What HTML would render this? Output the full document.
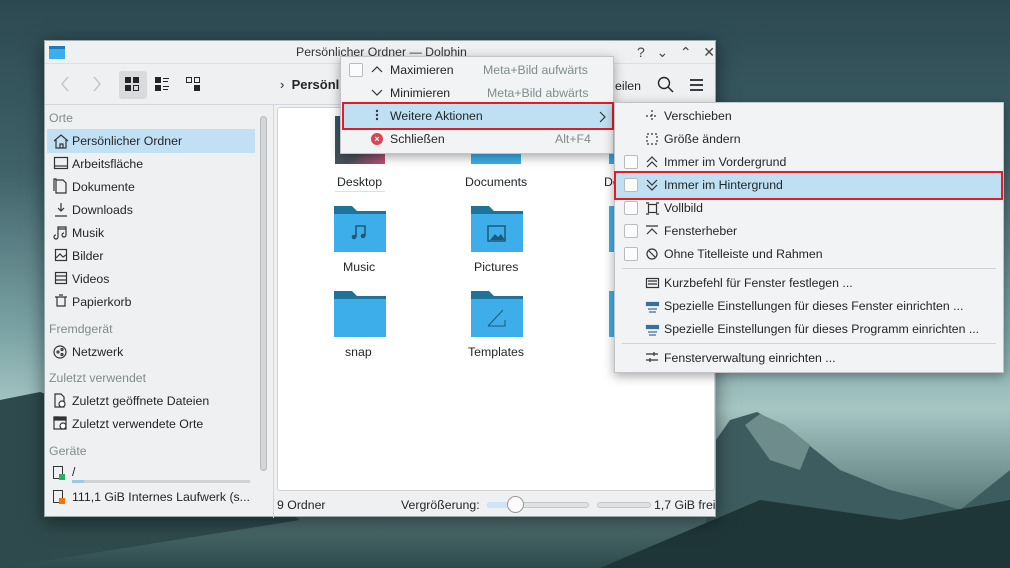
<!DOCTYPE html><html><head><style>
*{box-sizing:border-box;margin:0;padding:0}
body{width:1010px;height:568px;overflow:hidden;font-family:"Liberation Sans","DejaVu Sans",sans-serif;font-size:12.3px;color:#232629;position:relative;background:linear-gradient(180deg,#2c4850 0%,#3f6269 30%,#7aa2a4 58%,#a6c6c4 72%,#2c4a4c 100%)}
.abs{position:absolute}
.win{left:44px;top:40px;width:672px;height:477px;background:#eff0f1;border:1px solid #9aa;box-shadow:0 4px 18px rgba(0,0,0,.5)}
.t{position:absolute;white-space:nowrap;line-height:16px}
.menu{background:#f2f3f4;border:1px solid #c0c4c8;box-shadow:0 3px 10px rgba(0,0,0,.35)}
.cb{position:absolute;width:14px;height:14px;border:1px solid #b8bcc0;background:#fcfcfc;border-radius:2px}
.hl{position:absolute;background:#bfe0f3;outline:2px solid #e01c24}
.gray{color:#7f8c8d}
svg.i{position:absolute;overflow:visible}
svg.i *{fill:none;stroke:#333;stroke-width:1.2}
</style></head><body>
<svg class="abs" style="left:0;top:0" width="1010" height="568">
<path d="M0 400 L40 392 L80 405 L120 395 L160 430 L220 470 L300 520 L0 568Z" fill="#2f4a4d"/>
<path d="M716 440 L730 420 L757 412 L790 430 L840 470 L890 490 L930 500 L960 510 L1010 470 L1010 568 L700 568Z" fill="#3d5c5f"/>
<path d="M745 425 L760 414 L785 425 L810 445 L800 470 L770 460Z" fill="#6f8c8d"/>
<path d="M600 568 L760 500 L900 520 L1010 500 L1010 568Z" fill="#1f3638"/>
</svg>
<div class="abs win">
 <div class="abs" style="left:4px;top:5px;width:16px;height:13px;background:#3daee9;border-top:3px solid #1d7cb5"></div>
 <div class="t" style="left:251px;top:3px;color:#333">Persönlicher Ordner — Dolphin</div>
 <div class="t" style="left:592px;top:3px;font-size:14px;color:#444">?&nbsp;&nbsp; ⌄&nbsp;&nbsp; ⌃&nbsp;&nbsp; ✕</div>
 <div class="abs" style="left:0;top:22px;width:670px;height:1px;background:#dcdfe1"></div>
 <svg class="i" style="left:16px;top:36px" width="50" height="20"><path d="M7 0L1 7 7 14" style="stroke:#bbb"/><path d="M33 0L39 7 33 14" style="stroke:#bbb"/></svg>
 <div class="abs" style="left:74px;top:30px;width:28px;height:28px;background:#d8dadc;border-radius:3px"></div>
 <svg class="abs" style="left:80px;top:36px" width="100" height="16"><g fill="#232629"><rect x="0" y="0" width="6" height="6"/><rect x="8" y="0" width="6" height="6"/><rect x="0" y="8" width="6" height="6"/><rect x="8.5" y="8.5" width="5" height="5" fill="none" stroke="#232629"/></g>
 <g transform="translate(30,0)" fill="#232629"><rect x="0" y="0" width="6" height="6"/><rect x="0" y="8" width="6" height="6"/><rect x="8" y="1" width="6" height="1"/><rect x="8" y="4" width="5" height="1"/><rect x="8" y="9" width="6" height="1"/><rect x="8" y="12" width="5" height="1"/></g>
 <g transform="translate(61,0)" fill="none" stroke="#232629"><rect x="0.5" y="0.5" width="5" height="5"/><rect x="8.5" y="0.5" width="5" height="5"/><rect x="8.5" y="8.5" width="5" height="5" fill="#232629"/></g></svg>
 <div class="t" style="left:235px;top:36px;font-size:13px">›&nbsp; <b>Persönli</b></div>
 <div class="t" style="left:570px;top:37px">eilen</div>
 <svg class="abs" style="left:612px;top:35px" width="60" height="18"><circle cx="7" cy="7" r="5.5" fill="none" stroke="#232629" stroke-width="1.4"/><path d="M11 11 L16 16" stroke="#232629" stroke-width="1.5"/><path d="M33 4h13M33 9h13M33 14h13" stroke="#232629" stroke-width="1.8"/></svg>
 <div class="abs" style="left:0;top:63px;width:670px;height:1px;background:#d4d7d9"></div>
 <div class="abs" style="left:2px;top:88px;width:208px;height:24px;background:#c2e0f4"></div>
 <div class="t gray" style="left:4px;top:69px">Orte</div>
 <div class="t" style="left:27px;top:92px">Persönlicher Ordner</div>
 <div class="t" style="left:27px;top:115px">Arbeitsfläche</div>
 <div class="t" style="left:27px;top:138px">Dokumente</div>
 <div class="t" style="left:27px;top:161px">Downloads</div>
 <div class="t" style="left:27px;top:184px">Musik</div>
 <div class="t" style="left:27px;top:207px">Bilder</div>
 <div class="t" style="left:27px;top:230px">Videos</div>
 <div class="t" style="left:27px;top:253px">Papierkorb</div>
 <svg class="i" style="left:8px;top:92px" width="16" height="200">
  <path d="M1 8L8 2 15 8M3 7v8h10V7M7 15v-4h3v4"/>
  <rect x="1.5" y="24.5" width="13" height="11"/><path d="M1 33h14"/>
  <path d="M3 47h7l3 3v10H3zM3 47v-1h-2v12"/>
  <path d="M8 70v8M5 75l3 3 3-3M2 83h12"/>
  <path d="M5 104V94h8v8M5 104a2 2 0 1 1-2-2M13 102a2 2 0 1 1-2-2M5 96h8"/>
  <rect x="2.5" y="116.5" width="11" height="11"/><path d="M3 125l4-4 3 3 3-2"/>
  <rect x="2.5" y="139.5" width="11" height="11"/><path d="M2 143h12M2 147h12"/>
  <path d="M4 164v9h8v-9M2 164h12M6 162h4"/>
 </svg>
 <div class="t gray" style="left:4px;top:280px">Fremdgerät</div>
 <div class="t" style="left:27px;top:303px">Netzwerk</div>
 <svg class="i" style="left:8px;top:304px" width="16" height="16"><circle cx="7" cy="7" r="6"/><circle cx="5" cy="7" r="1"/><circle cx="9" cy="4.5" r="1"/><circle cx="9" cy="9.5" r="1"/></svg>
 <div class="t gray" style="left:4px;top:329px">Zuletzt verwendet</div>
 <div class="t" style="left:27px;top:352px">Zuletzt geöffnete Dateien</div>
 <div class="t" style="left:27px;top:375px">Zuletzt verwendete Orte</div>
 <svg class="i" style="left:8px;top:352px" width="16" height="40"><path d="M2 1h6l3 3v10H2z"/><circle cx="9" cy="11" r="3" style="fill:#fff"/>
  <path d="M1 25h12v11H1zM1 25v-1h5" /><rect x="1" y="24" width="12" height="3" style="fill:#333"/><circle cx="10" cy="33" r="3" style="fill:#fff"/></svg>
 <div class="t gray" style="left:4px;top:402px">Geräte</div>
 <div class="t" style="left:27px;top:423px">/</div>
 <div class="abs" style="left:27px;top:439px;width:178px;height:3px;background:#d0d3d6"></div>
 <div class="abs" style="left:27px;top:439px;width:12px;height:3px;background:#9cc9e8"></div>
 <div class="t" style="left:27px;top:448px">111,1 GiB Internes Laufwerk (s...</div>
 <div class="abs" style="left:8px;top:425px;width:10px;height:13px;border:1.5px solid #333"></div>
 <div class="abs" style="left:14px;top:433px;width:6px;height:6px;background:#27ae60"></div>
 <div class="abs" style="left:8px;top:449px;width:10px;height:13px;border:1.5px solid #333"></div>
 <div class="abs" style="left:14px;top:457px;width:6px;height:6px;background:#f67400"></div>
 <div class="abs" style="left:215px;top:75px;width:7px;height:355px;border-radius:4px;background:#d4d6d8;border:1px solid #b8bbbe"></div>
 <div class="abs" style="left:228px;top:64px;width:1px;height:413px;background:#d4d7d9"></div>
 <div class="abs" style="left:232px;top:66px;width:438px;height:384px;background:#fff;border:1px solid #cfd2d4;border-radius:3px"></div>
 <div class="abs" style="left:290px;top:75px;width:50px;height:48px;background:linear-gradient(135deg,#2f5a66,#4a4f58 60%,#c2507a)"></div>
 <div class="t" style="left:292px;top:133px">Desktop</div>
 <div class="abs" style="left:290px;top:150px;width:50px;height:1px;background:#cde5f5"></div>
 <div class="abs" style="left:426px;top:108px;width:50px;height:15px;background:#3daee9"></div>
 <div class="t" style="left:420px;top:133px">Documents</div>
 <div class="abs" style="left:564px;top:108px;width:6px;height:15px;background:#3daee9"></div>
 <div class="t" style="left:559px;top:133px">Do</div>
 <svg class="abs" style="left:289px;top:165px" width="290" height="140">
  <defs><g id="f"><path d="M0 0h18l5 5h29v41H0z" fill="#1d7399"/><rect x="0" y="8" width="52" height="38" fill="#3daee9"/></g></defs>
  <use href="#f" x="0" y="0"/><use href="#f" x="137" y="0"/><use href="#f" x="0" y="85"/><use href="#f" x="137" y="85"/>
  <rect x="275" y="0" width="10" height="46" fill="#3daee9"/><rect x="275" y="85" width="10" height="46" fill="#3daee9"/>
  <path d="M22 31V20h9v10M22 20h9" stroke="#1d5a7a" stroke-width="1.6" fill="none"/><circle cx="20" cy="31" r="2.3" fill="#1d5a7a"/><circle cx="29" cy="30" r="2.3" fill="#1d5a7a"/>
  <rect x="154" y="20" width="17" height="15" fill="none" stroke="#1d5a7a" stroke-width="1.5"/><path d="M156 34l5-6 3 3 3-3 4 6z" fill="#1d5a7a"/>
  <path d="M154 120l15-16M154 120h17v-6" stroke="#1d5a7a" fill="none"/>
 </svg>
 <div class="t" style="left:298px;top:218px">Music</div>
 <div class="t" style="left:429px;top:218px">Pictures</div>
 <div class="t" style="left:300px;top:303px">snap</div>
 <div class="t" style="left:423px;top:303px">Templates</div>
 <div class="t" style="left:232px;top:456px">9 Ordner</div>
 <div class="t" style="left:356px;top:456px">Vergrößerung:</div>
 <div class="abs" style="left:442px;top:461px;width:102px;height:6px;border-radius:3px;background:#dfe1e3;border:1px solid #c4c7ca"></div>
 <div class="abs" style="left:442px;top:461px;width:28px;height:6px;border-radius:3px;background:#cde5f5"></div>
 <div class="abs" style="left:462px;top:455px;width:17px;height:17px;border-radius:50%;background:#fcfcfc;border:1px solid #999"></div>
 <div class="abs" style="left:552px;top:461px;width:54px;height:6px;border-radius:3px;background:#dfe1e3;border:1px solid #c4c7ca"></div>
 <div class="t" style="left:609px;top:456px">1,7 GiB frei</div>
</div>
<div class="abs menu" style="left:340px;top:56px;width:274px;height:98px"></div>
<div class="cb" style="left:349px;top:63px"></div>
<div class="hl" style="left:344px;top:104px;width:268px;height:24px"></div>
<svg class="i" style="left:372px;top:66px" width="12" height="80"><path d="M0 6l5-5 5 5"/><path d="M0 24l5 5 5-5"/><circle cx="5" cy="45" r=".6" style="fill:#333"/><circle cx="5" cy="49" r=".6" style="fill:#333"/><circle cx="5" cy="53" r=".6" style="fill:#333"/></svg>
<div class="abs" style="left:371px;top:133px;width:12px;height:12px;border-radius:50%;background:#da4453;color:#fff;font-size:9px;text-align:center;line-height:12px;font-weight:bold">×</div>
<div class="t" style="left:390px;top:62px">Maximieren</div>
<div class="t" style="left:390px;top:85px">Minimieren</div>
<div class="t" style="left:390px;top:108px">Weitere Aktionen</div>
<div class="t" style="left:390px;top:131px">Schließen</div>
<div class="t gray" style="left:483px;top:62px">Meta+Bild aufwärts</div>
<div class="t gray" style="left:487px;top:85px">Meta+Bild abwärts</div>
<svg class="i" style="left:599px;top:111px" width="8" height="12"><path d="M1 1l5 5-5 5"/></svg>
<div class="t gray" style="left:555px;top:131px">Alt+F4</div>
<div class="abs menu" style="left:614px;top:102px;width:390px;height:271px"></div>
<div class="hl" style="left:616px;top:173px;width:385px;height:25px"></div>
<div class="cb" style="left:624px;top:155px"></div>
<div class="cb" style="left:624px;top:178px"></div>
<div class="cb" style="left:624px;top:201px"></div>
<div class="cb" style="left:624px;top:224px"></div>
<div class="cb" style="left:624px;top:247px"></div>
<div class="abs" style="left:622px;top:268px;width:374px;height:1px;background:#d0d3d6"></div>
<div class="abs" style="left:622px;top:343px;width:374px;height:1px;background:#d0d3d6"></div>
<svg class="i" style="left:646px;top:110px" width="14" height="260">
 <path d="M6 0v12M0 6h12" style="stroke-dasharray:2 2"/>
 <rect x="1" y="24" width="10" height="10" style="stroke-dasharray:2 2"/>
 <path d="M1 52l5-5 5 5M1 57l5-5 5 5"/>
 <path d="M1 70l5 5 5-5M1 75l5 5 5-5"/>
 <rect x="2.5" y="94.5" width="8" height="8"/><path d="M0 93h3M10 93h3M0 104h3M10 104h3"/>
 <path d="M0 116h12M1 124l5-5 5 5"/>
 <circle cx="6" cy="144" r="5"/><path d="M3 141l6 6"/>
 <rect x="0.5" y="168.5" width="12" height="9"/><path d="M2 171h9M2 174h9" />
 <rect x="0.5" y="192.5" width="12" height="3" style="fill:#3a6f9e;stroke:#3a6f9e"/><path d="M2 199h9M3 202h7" style="stroke:#3a6f9e"/>
 <rect x="0.5" y="215.5" width="12" height="3" style="fill:#3a6f9e;stroke:#3a6f9e"/><path d="M2 222h9M3 225h7" style="stroke:#3a6f9e"/>
 <path d="M0 244h12M0 250h12M8 242v4M4 248v4"/>
</svg>
<div class="t" style="left:664px;top:108px">Verschieben</div>
<div class="t" style="left:664px;top:131px">Größe ändern</div>
<div class="t" style="left:664px;top:154px">Immer im Vordergrund</div>
<div class="t" style="left:664px;top:177px">Immer im Hintergrund</div>
<div class="t" style="left:664px;top:200px">Vollbild</div>
<div class="t" style="left:664px;top:223px">Fensterheber</div>
<div class="t" style="left:664px;top:246px">Ohne Titelleiste und Rahmen</div>
<div class="t" style="left:664px;top:275px">Kurzbefehl für Fenster festlegen ...</div>
<div class="t" style="left:664px;top:298px">Spezielle Einstellungen für dieses Fenster einrichten ...</div>
<div class="t" style="left:664px;top:321px">Spezielle Einstellungen für dieses Programm einrichten ...</div>
<div class="t" style="left:664px;top:350px">Fensterverwaltung einrichten ...</div>
</body></html>
